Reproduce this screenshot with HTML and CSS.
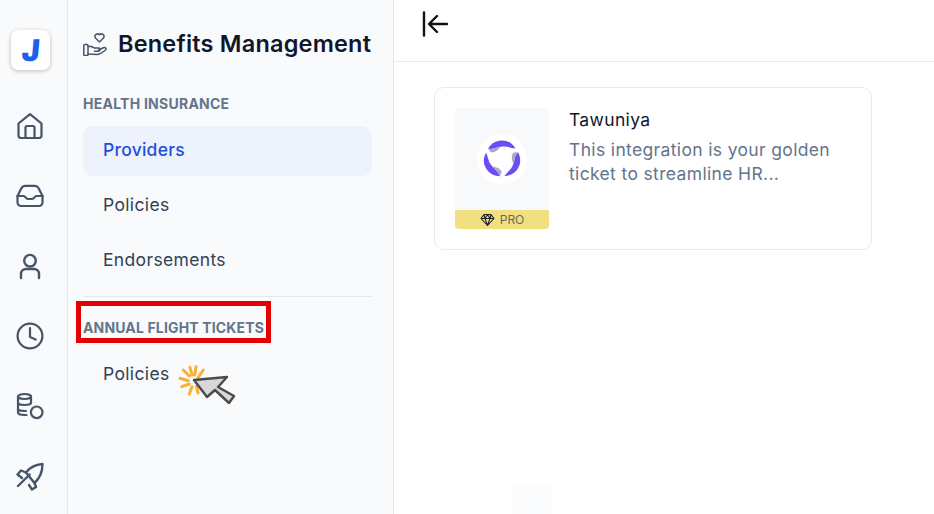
FILE: index.html
```html
<!DOCTYPE html>
<html lang="en">
<head>
  <meta charset="UTF-8">
  <meta name="viewport" content="width=device-width, initial-scale=1.0">
  <title>Benefits Management</title>
  <link rel="stylesheet" href="styles.css">
</head>
<body>
  <div class="app">
    <nav class="rail">
      <div class="logo"><span class="logo-j">J</span></div>
      <a class="rail-item">
        <svg width="30" height="30" viewBox="0 0 30 30" fill="none" stroke="#475569" stroke-width="2.2" stroke-linejoin="round" stroke-linecap="round"><path d="M3.5 12.5 15 3.2l11.5 9.3v12a2.5 2.5 0 0 1-2.5 2.5H6a2.5 2.5 0 0 1-2.5-2.5z"/><path d="M10.5 27V16.500a1.500 1.500 0 0 1 1.500-1.500h6a1.500 1.500 0 0 1 1.500 1.500V27"/></svg>
      </a>
      <a class="rail-item">
        <svg width="30" height="30" viewBox="0 0 30 30" fill="none" stroke="#475569" stroke-width="2.2" stroke-linejoin="round" stroke-linecap="round"><path d="M2.5 15v6.5a3.5 3.5 0 0 0 3.5 3.500h18a3.500 3.500 0 0 0 3.500-3.500V15"/><path d="M2.5 15 6.5 7a4 4 0 0 1 3.500-2.200h10a4 4 0 0 1 3.500 2.200l4 8"/><path d="M2.5 15h6c1 0 1.500.5 2 1.300.6 1.100 1.500 1.700 2.700 1.700h3.600c1.200 0 2.100-.6 2.700-1.700.5-.8 1-1.300 2-1.300h6"/></svg>
      </a>
      <a class="rail-item">
        <svg width="30" height="30" viewBox="0 0 30 30" fill="none" stroke="#475569" stroke-width="2.4" stroke-linecap="round"><circle cx="15" cy="9.700" r="5.800"/><path d="M6 27v-4a5 5 0 0 1 5-5h8a5 5 0 0 1 5 5v4"/></svg>
      </a>
      <a class="rail-item">
        <svg width="30" height="30" viewBox="0 0 30 30" fill="none" stroke="#475569" stroke-width="2.2" stroke-linecap="round" stroke-linejoin="round"><circle cx="15" cy="15" r="12.4"/><path d="M15 7v9l5.700 2.500"/></svg>
      </a>
      <a class="rail-item">
        <svg width="30" height="30" viewBox="0 0 30 30" fill="none" stroke="#475569" stroke-width="2.2" stroke-linecap="round" stroke-linejoin="round"><ellipse cx="9.500" cy="5.500" rx="6.500" ry="2.500"/><path d="M3 5.500v16c0 1.500 2.900 2.500 6.500 2.500h2M16 5.500v7M3 11.500c0 1.500 2.900 2.500 6.500 2.500s6.500-1 6.500-2.500M3 17.500c0 1.500 2.900 2.500 6.500 2.500h1.500"/><circle cx="21.700" cy="21.300" r="5.800"/></svg>
      </a>
      <a class="rail-item">
        <svg width="30" height="30" viewBox="0 0 30 30" fill="none" stroke="#475569" stroke-width="2.4" stroke-linecap="round" stroke-linejoin="round"><path d="M11 11.500C15 6 21 3.500 27.500 3 27.500 10 25 17 19.500 22z"/><path d="M11 11.500 6 9.500 2.500 13.500 7 17M19.500 22l1.500 4-4 2.500-3-4.500M3 25l11.700-11.500"/></svg>
      </a>
    </nav>

    <aside class="side">
      <div class="side-title">
        <svg width="24" height="24" viewBox="0 0 24 24" fill="none" stroke="#475569" stroke-width="1.5" stroke-linejoin="round" stroke-linecap="round"><rect x="0.8" y="12.5" width="4.2" height="11" rx="1"/><path d="M5 14.500h3.500l3 1.500h4a1.600 1.600 0 0 1 0 3.200h-4M15.500 18l5.500-2.500a1.500 1.500 0 0 1 1.500 2.500c-3 2.500-5 4-8 4.500l-9.500-.5"/><path d="M16.500 10 12.300 5.800a2.600 2.600 0 0 1 4.200-3 2.600 2.600 0 0 1 4.200 3z"/></svg>
        <h1>Benefits Management</h1>
      </div>
      <h2 class="group-label">HEALTH INSURANCE</h2>
      <ul class="menu">
        <li class="menu-item active">Providers</li>
        <li class="menu-item">Policies</li>
        <li class="menu-item">Endorsements</li>
      </ul>
      <div class="divider"></div>
      <h2 class="group-label annual">ANNUAL FLIGHT TICKETS</h2>
      <ul class="menu">
        <li class="menu-item">Policies</li>
      </ul>
      <svg class="cursor" width="58" height="40" viewBox="0 0 58 40" fill="none">
        <path d="M18 2.700 16.700 11M25.300 6l-5 7.300M5.300 6l6 6M12 3.300 14 11M2 14.300l8.300 2.400M3.700 22.700l7.600-2.700M11.300 30 14 22.700M20 29l-1.500-6.500" stroke="#fbb034" stroke-width="3" stroke-linecap="round"/>
        <path d="M16 16 49 13l-9 10 16 9-5 7-14-13-8 7z" fill="#d8d8d8" stroke="#4b4b4b" stroke-width="2.400" stroke-linejoin="round"/>
      </svg>
    </aside>

    <main class="main">
      <header class="topbar">
        <svg width="27" height="26" viewBox="0 0 27 26" fill="none" stroke="#111" stroke-width="2.4" stroke-linecap="round" stroke-linejoin="round"><path d="M2 1.500v23M25 13H7.500M15 5l-8 8 8 8"/></svg>
      </header>
      <div class="content">
        <div class="card">
          <div class="thumb">
            <div class="thumb-logo">
              <div class="logo-circle">
                <svg width="38" height="38" viewBox="0 0 38 38">
                  <defs>
                    <g id="blade">
                      <path d="M5 8.500C9 2.500 14 .5 19 .5c6 0 10 2.500 13.500 8-4.500-.5-8.500-2.500-13-2C15 7 10 10 5 8.500z" fill="#6d4cf6"/>
                      <path d="M5 8.500c4 1.500 9-1.500 12.500-2C15.500 10 11 13.500 7.500 12z" fill="#a9a7d2"/>
                    </g>
                  </defs>
                  <use href="#blade"/>
                  <use href="#blade" transform="rotate(120 19 19)"/>
                  <use href="#blade" transform="rotate(240 19 19)"/>
                </svg>
              </div>
            </div>
            <div class="pro">
              <svg width="15" height="14" viewBox="0 0 15 14" fill="none" stroke="#222" stroke-width="1.100" stroke-linejoin="round"><path d="M4 1.500h7l3 4-6.500 7L1 5.500zM1 5.500h13M5 5.500l2.500 7 2.500-7M4 1.500l1 4 2.500-4 2.500 4 1-4"/></svg>
              <span>PRO</span>
            </div>
          </div>
          <div class="card-body">
            <h3>Tawuniya</h3>
            <p>This integration is your golden ticket to streamline HR...</p>
          </div>
        </div>
      </div>
      <div class="ghost"></div>
    </main>
  </div>
</body>
</html>
```

FILE: styles.css
```css
* {
  box-sizing: border-box;
}

html, body {
  margin: 0;
  height: 100%;
  overflow: hidden;
}

body {
  font-family: "Inter", "Liberation Sans", sans-serif;
  background: #fff;
}

.app {
  display: flex;
  height: 514px;
}

/* icon rail */
.rail {
  width: 68px;
  background: #f8fafc;
  border-right: 1px solid #e5e7eb;
  display: flex;
  flex-direction: column;
  align-items: center;
  padding: 30px 7px 0 0;
}

.logo {
  width: 39px;
  height: 40px;
  margin-left: 1px;
  margin-bottom: 21px;
  background: #fff;
  border-radius: 7px;
  box-shadow: 0 1px 4px rgba(0, 0, 0, 0.25);
  display: flex;
  align-items: center;
  justify-content: center;
}

.logo-j {
  color: #1d5fee;
  font-weight: 900;
  font-size: 30px;
  line-height: 1;
  transform: skewX(-5deg);
}

.rail-item {
  height: 70px;
  width: 100%;
  display: flex;
  align-items: center;
  justify-content: center;
}

/* sidebar */
.side {
  position: relative;
  width: 326px;
  background: #f8fafc;
  border-right: 1px solid #e5e7eb;
  padding: 30px 21px 0 15px;
}

.side-title {
  display: flex;
  align-items: center;
  gap: 11px;
  height: 27px;
  margin-bottom: 37px;
}

.side-title h1 {
  margin: 0;
  font-size: 23.5px;
  font-weight: 600;
  letter-spacing: 0.2px;
  color: #0f172a;
  white-space: nowrap;
}

.group-label {
  margin: 0;
  font-size: 14px;
  line-height: 20px;
  font-weight: 700;
  color: #64748b;
  letter-spacing: 0.25px;
}

.menu {
  list-style: none;
  margin: 12px 0 0;
  padding: 0;
}

.menu-item {
  height: 50px;
  margin-bottom: 5px;
  padding: 0 0 3px 20px;
  border-radius: 10px;
  display: flex;
  align-items: center;
  font-size: 17.5px;
  letter-spacing: 0.35px;
  color: #334155;
}

.menu-item.active {
  background: #eef2fd;
  color: #1d4fd8;
  font-weight: 500;
  letter-spacing: 0.25px;
}

.divider {
  height: 1px;
  background: #e5e7eb;
  margin-top: 10px;
  margin-bottom: 21px;
}

.annual {
  position: relative;
  white-space: nowrap;
  letter-spacing: 0.15px;
}

/* red annotation box drawn over the screenshot */
.annual::after {
  content: "";
  position: absolute;
  left: -7px;
  top: -17px;
  width: 195px;
  height: 42px;
  box-sizing: border-box;
  border: 5px solid #e60000;
}

.annual + .menu {
  margin-top: 12px;
}

.cursor {
  position: absolute;
  left: 110px;
  top: 364px;
}

/* main */
.main {
  position: relative;
  flex: 1;
  min-width: 0;
}

.topbar {
  height: 62px;
  border-bottom: 1px solid #e8eaee;
  padding: 11px 0 0 28px;
}

.content {
  padding: 25px 0 0 40px;
}

.card {
  width: 438px;
  height: 163px;
  border: 1px solid #e8eaee;
  border-radius: 10px;
  padding: 20px;
  display: flex;
  gap: 20px;
}

.thumb {
  width: 94px;
  height: 121px;
  border-radius: 4px;
  overflow: hidden;
  background: #f8f9fb;
  display: flex;
  flex-direction: column;
  flex-shrink: 0;
}

.thumb-logo {
  flex: 1;
  display: flex;
  align-items: center;
  justify-content: center;
}

.logo-circle {
  width: 50px;
  height: 50px;
  background: #fff;
  border-radius: 50%;
  display: flex;
  align-items: center;
  justify-content: center;
}

.pro {
  height: 19px;
  background: #f2df80;
  display: flex;
  align-items: center;
  justify-content: center;
  gap: 5px;
  font-size: 12px;
  color: #6b6a5c;
}

.card-body h3 {
  margin: 0;
  font-size: 17.5px;
  letter-spacing: 0.35px;
  line-height: 24px;
  font-weight: 400;
  color: #0f172a;
}

.card-body p {
  margin: 6px 0 0;
  font-size: 17.5px;
  letter-spacing: 0.35px;
  line-height: 24px;
  color: #64748b;
}

.ghost {
  position: absolute;
  left: 119px;
  top: 483px;
  width: 40px;
  height: 31px;
  background: #fbfcfd;
}
```
